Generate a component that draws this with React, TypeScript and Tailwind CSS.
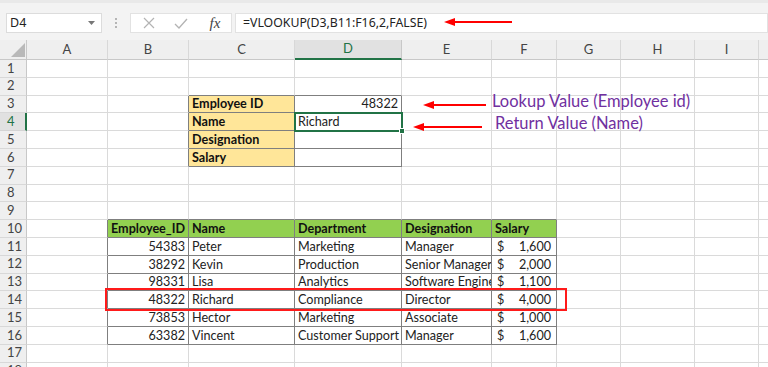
import React from 'react'

const COLS = ['A', 'B', 'C', 'D', 'E', 'F', 'G', 'H', 'I']
const ROWS = Array.from({ length: 18 }, (_, i) => i + 1)

type Cell = { v?: string; bold?: boolean; right?: boolean; bg?: string; money?: [string, string] }

const cells: Record<string, Cell> = {
  'C3': { v: 'Employee ID', bold: true, bg: 'bg-[#ffe699]' },
  'C4': { v: 'Name', bold: true, bg: 'bg-[#ffe699]' },
  'C5': { v: 'Designation', bold: true, bg: 'bg-[#ffe699]' },
  'C6': { v: 'Salary', bold: true, bg: 'bg-[#ffe699]' },
  'D3': { v: '48322', right: true },
  'D4': { v: 'Richard' },
  'B10': { v: 'Employee_ID', bold: true, bg: 'bg-[#92d050]' },
  'C10': { v: 'Name', bold: true, bg: 'bg-[#92d050]' },
  'D10': { v: 'Department', bold: true, bg: 'bg-[#92d050]' },
  'E10': { v: 'Designation', bold: true, bg: 'bg-[#92d050]' },
  'F10': { v: 'Salary', bold: true, bg: 'bg-[#92d050]' },
}

const data = [
  ['54383', 'Peter', 'Marketing', 'Manager', '1,600'],
  ['38292', 'Kevin', 'Production', 'Senior Manager', '2,000'],
  ['98331', 'Lisa', 'Analytics', 'Software Engineer', '1,100'],
  ['48322', 'Richard', 'Compliance', 'Director', '4,000'],
  ['73853', 'Hector', 'Marketing', 'Associate', '1,000'],
  ['63382', 'Vincent', 'Customer Support', 'Manager', '1,600'],
]
data.forEach((d, i) => {
  const r = 11 + i
  cells['B' + r] = { v: d[0], right: true }
  cells['C' + r] = { v: d[1] }
  cells['D' + r] = { v: d[2] }
  cells['E' + r] = { v: d[3] }
  cells['F' + r] = { money: ['$', d[4]] }
})

function boxed(r: number, c: string) {
  if (r >= 3 && r <= 6 && (c === 'C' || c === 'D')) return true
  if (r >= 10 && r <= 16 && 'BCDEF'.includes(c)) return true
  return false
}

function nextCol(c: string) {
  const i = COLS.indexOf(c)
  return COLS[i + 1] ?? ''
}

function SheetCell({ r, c }: { r: number; c: string }) {
  const cell = cells[c + r] ?? {}
  const rDark = boxed(r, c) || (nextCol(c) !== '' && boxed(r, nextCol(c)))
  const bDark = boxed(r, c) || boxed(r + 1, c)
  return (
    <div
      className={[
        'flex items-end pb-[1px] leading-[15px] overflow-hidden whitespace-nowrap border-r border-b px-[3px]',
        rDark ? 'border-r-[#7f7f7f]' : 'border-r-[#dadada]',
        bDark ? 'border-b-[#7f7f7f]' : 'border-b-[#dadada]',
        cell.bg ?? 'bg-white',
        cell.bold ? 'font-bold text-[#111]' : 'text-[#222]',
        cell.right ? 'justify-end' : 'justify-start',
      ].join(' ')}
    >
      {cell.money ? (
        <div className="flex w-full justify-between pl-[2px] pr-[2px]">
          <span>{cell.money[0]}</span>
          <span>{cell.money[1]}</span>
        </div>
      ) : (
        <span>{cell.v}</span>
      )}
    </div>
  )
}

function FormulaBar() {
  return (
    <div className="h-[40px] bg-[#f3f3f3] border-t-[3px] border-t-[#e9e9e9] flex items-start pt-[10px] font-['Noto_Sans',sans-serif]">
      <div className="ml-[6px] w-[96px] h-[20px] bg-white border border-[#dcdcdc] flex items-center justify-between pl-[3px] pr-[6px]">
        <span className="text-[12.5px] text-[#222]">D4</span>
        <svg width="7" height="4" viewBox="0 0 7 4">
          <path d="M0 0 L7 0 L3.5 4 Z" fill="#777" />
        </svg>
      </div>
      <div className="w-[28px] h-[20px] flex flex-col items-center justify-center gap-[2px]">
        <span className="w-[2px] h-[2px] bg-[#b5b5b5]" />
        <span className="w-[2px] h-[2px] bg-[#b5b5b5]" />
        <span className="w-[2px] h-[2px] bg-[#b5b5b5]" />
      </div>
      <div className="w-[102px] h-[20px] bg-white border border-[#e2e2e2] flex items-center">
        <div className="w-[33px] flex justify-center pl-[2px]">
          <svg width="12" height="12" viewBox="0 0 12 12">
            <path d="M1 1 L11 11 M11 1 L1 11" stroke="#b3b3b3" strokeWidth="1.2" />
          </svg>
        </div>
        <div className="w-[33px] flex justify-center">
          <svg width="14" height="11" viewBox="0 0 14 11">
            <path d="M1 6 L5 10 L13 1" stroke="#b3b3b3" strokeWidth="1.3" fill="none" />
          </svg>
        </div>
        <div className="flex-1 flex justify-center pl-[2px]">
          <span className="font-['Liberation_Serif',serif] italic text-[15px] text-[#444] leading-none">fx</span>
        </div>
      </div>
      <div className="ml-[3px] flex-1 h-[20px] bg-white border border-[#e2e2e2] flex items-center pl-[7px]">
        <span className="text-[12.3px] text-[#222]">=VLOOKUP(D3,B11:F16,2,FALSE)</span>
      </div>
    </div>
  )
}

function Grid() {
  return (
    <div className="grid grid-cols-[27px_81px_81px_106px_107px_90px_65px_64px_74px_64px_1fr] auto-rows-[17.8px] [grid-template-rows:20px] font-['Lato',sans-serif] text-[12.6px]">
      <div className="h-[20px] bg-[#efefef] border-r border-b border-[#c8c8c8] flex items-end justify-end pb-[2px] pr-[1px]">
        <svg width="14" height="14" viewBox="0 0 14 14">
          <path d="M14 0 L14 14 L0 14 Z" fill="#b9b9b9" />
        </svg>
      </div>
      {COLS.map((c) => (
        <div
          key={c}
          className={
            c === 'D'
              ? 'h-[20px] bg-[#e1e1e1] border-r border-r-[#c8c8c8] border-b-2 border-b-[#217346] flex items-center justify-center text-[#217346] text-[13px]'
              : 'h-[20px] bg-[#efefef] border-r border-r-[#d8d8d8] border-b border-b-[#c8c8c8] flex items-center justify-center text-[#444] text-[13px]'
          }
        >
          {c}
        </div>
      ))}
      <div className="h-[20px] bg-[#efefef] border-b border-[#c8c8c8]" />
      {ROWS.map((r) => (
        <React.Fragment key={r}>
          <div
            className={
              r === 4
                ? 'bg-[#e1e1e1] border-r-2 border-r-[#217346] border-b border-b-[#d4d4d4] flex items-center pl-[7px] text-[#217346] text-[13px]'
                : 'bg-[#efefef] border-r border-r-[#c8c8c8] border-b border-b-[#d8d8d8] flex items-center pl-[7px] text-[#444] text-[13px]'
            }
          >
            {r}
          </div>
          {COLS.map((c) => (
            <SheetCell key={c} r={r} c={c} />
          ))}
          <div className="bg-white border-b border-b-[#dadada]" />
        </React.Fragment>
      ))}
    </div>
  )
}

function Arrow({ x1, x2, y }: { x1: number; x2: number; y: number }) {
  return (
    <>
      <line x1={x1} y1={y} x2={x2 + 9} y2={y} stroke="#ff0000" strokeWidth="2" />
      <path d={`M${x2} ${y} L${x2 + 11} ${y - 4} L${x2 + 11} ${y + 4} Z`} fill="#ff0000" />
    </>
  )
}

export default function App() {
  return (
    <div className="relative w-[768px] h-[367px] overflow-hidden bg-white">
      <FormulaBar />
      <Grid />

      {/* selected cell D4 */}
      <div className="absolute left-[294px] top-[112px] w-[109px] h-[20px] border-2 border-[#217346]" />
      <div className="absolute left-[399px] top-[128px] w-[6px] h-[6px] bg-[#217346] border border-white" />

      {/* highlighted row */}
      <div className="absolute left-[105px] top-[288px] w-[462px] h-[23px] border-2 border-[#ff1a1a]" />

      <svg className="absolute left-0 top-0 pointer-events-none" width="768" height="367">
        <Arrow x1={512} x2={444} y={22} />
        <Arrow x1={486} x2={423} y={105} />
        <Arrow x1={482} x2={413} y={127} />
      </svg>

      <div className="absolute left-[492px] top-[90px] font-['Lato',sans-serif] text-[16.5px] leading-[22px] text-[#7030a0] whitespace-nowrap">
        Lookup Value (Employee id)
      </div>
      <div className="absolute left-[495px] top-[112px] font-['Lato',sans-serif] text-[16.5px] leading-[22px] text-[#7030a0] whitespace-nowrap">
        Return Value (Name)
      </div>
    </div>
  )
}
